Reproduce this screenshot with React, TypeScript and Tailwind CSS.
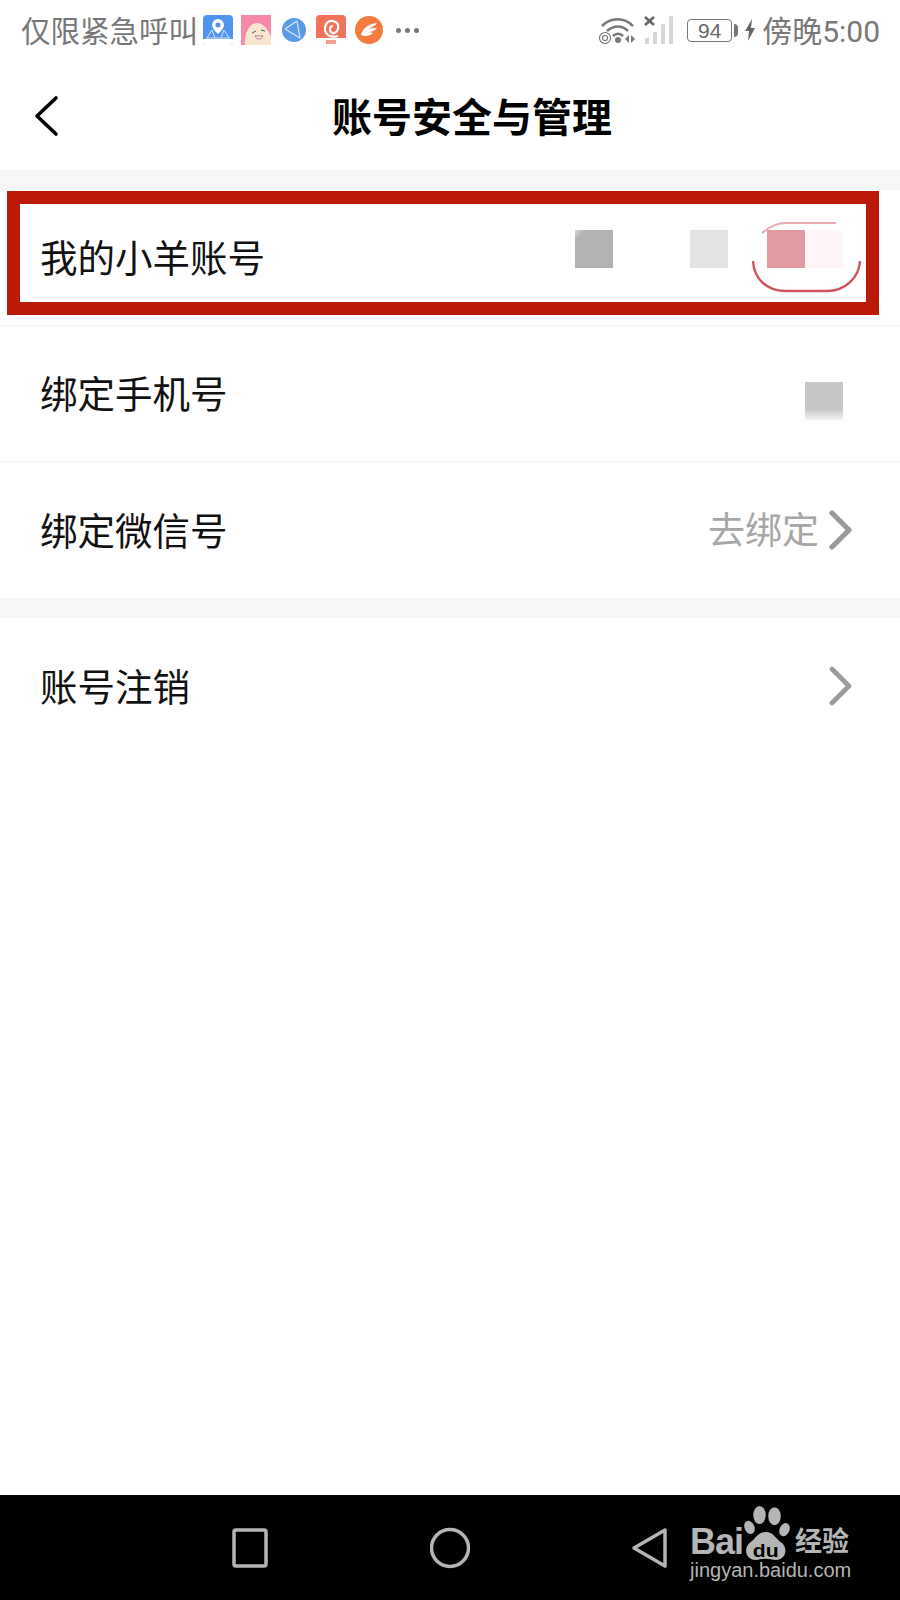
import type { ReactNode } from 'react'

const CJK = "font-['Noto_Sans_CJK_SC','Noto_Sans',sans-serif]"

function Chevron({ thick = false }: { thick?: boolean }) {
  return (
    <svg width="24" height="42" viewBox="0 0 24 42" fill="none" className="shrink-0">
      <path
        d="M4 4 L21 21 L4 38"
        stroke="#9a9a9a"
        strokeWidth={thick ? 5.2 : 4.6}
        strokeLinecap="round"
        strokeLinejoin="round"
      />
    </svg>
  )
}

function Row({ label, children, divider = true }: { label: string; children?: ReactNode; divider?: boolean }) {
  return (
    <div className={`relative flex h-[136px] items-center pl-[40px] ${divider ? 'border-b border-[#f4f4f4]' : ''}`}>
      <span className="pb-[3px] text-[37.5px] leading-none text-[#111]">{label}</span>
      {children}
    </div>
  )
}

function AppIcons() {
  return (
    <div className="ml-[5px] flex items-center">
      {/* map pin app */}
      <svg width="30" height="30" viewBox="0 0 30 30" className="shrink-0">
        <rect width="30" height="30" rx="4" fill="#4f95ee" />
        <path d="M0 24h30v2a4 4 0 0 1-4 4H4a4 4 0 0 1-4-4z" fill="#fff" />
        <path d="M15 4a6 6 0 0 1 6 6c0 4-6 9-6 9s-6-5-6-9a6 6 0 0 1 6-6z" fill="#fff" />
        <circle cx="15" cy="10" r="2.5" fill="#4f95ee" />
        <path d="M4 23l5-8 3 8M26 23l-5-8-3 8M3 23h24" stroke="#cfe3fb" strokeWidth="1" fill="none" />
      </svg>
      {/* cartoon face */}
      <svg width="30" height="30" viewBox="0 0 30 30" className="ml-[8px] shrink-0">
        <rect width="30" height="30" fill="#f988ac" />
        <path d="M4 30C3 16 10 7 17 8c7 1 11 9 13 14v8z" fill="#f8e6ce" />
        <path d="M11 18l4-2M20 15l4 1" stroke="#555" strokeWidth="1" />
        <path d="M14 21c2 4 6 4 8 0z" fill="#fff" stroke="#a55" strokeWidth="0.8" />
      </svg>
      {/* network globe */}
      <svg width="24" height="24" viewBox="0 0 24 24" className="ml-[11px] shrink-0">
        <circle cx="12" cy="12" r="12" fill="#5a9ae6" />
        <path d="M3 11L15 3M3 11l15 9M15 3l3 17" stroke="#d8e8fb" strokeWidth="1.2" />
      </svg>
      {/* spiral app */}
      <svg width="30" height="30" viewBox="0 0 30 30" className="ml-[10px] shrink-0">
        <rect width="30" height="30" rx="4" fill="#f0735a" />
        <rect y="23" width="30" height="7" fill="#fff" />
        <path d="M22 21c-7 2-13-1-13-7s4-9 8-8 6 4 5 8-5 5-7 3-1-6 2-6" stroke="#fff" strokeWidth="2.2" fill="none" />
        <rect x="10" y="25" width="10" height="4" fill="#f0a090" />
      </svg>
      {/* banana app */}
      <svg width="28" height="28" viewBox="0 0 28 28" className="ml-[9px] shrink-0">
        <circle cx="14" cy="14" r="14" fill="#f57c3e" />
        <path d="M6 19C8 12 13 8 22 7c-2 3-6 4-8 6 3-1 5-1 8-1-3 3-6 4-9 4 2 0 4 1 5 1-3 3-8 4-12 2z" fill="#fff" />
      </svg>
      {/* overflow dots */}
      <div className="ml-[13px] flex gap-[4px]">
        <span className="h-[5px] w-[5px] rounded-full bg-[#777]" />
        <span className="h-[5px] w-[5px] rounded-full bg-[#777]" />
        <span className="h-[5px] w-[5px] rounded-full bg-[#777]" />
      </div>
    </div>
  )
}

function StatusRight() {
  return (
    <div className="ml-auto flex items-center">
      {/* wifi */}
      <svg width="38" height="28" viewBox="0 0 38 28" className="shrink-0">
        <path d="M4 10C13 1 26 1 35 10" stroke="#777" strokeWidth="2.6" fill="none" />
        <path d="M9 15c7-6 15-6 21 0" stroke="#777" strokeWidth="2.6" fill="none" />
        <path d="M15 20c3-3 7-3 10 0" stroke="#777" strokeWidth="2.6" fill="none" />
        <circle cx="20" cy="24" r="3" fill="#777" />
        <circle cx="7" cy="22" r="5.5" stroke="#777" strokeWidth="1.2" fill="none" />
        <circle cx="7" cy="22" r="2.5" stroke="#777" strokeWidth="1.2" fill="none" />
        <path d="M27 23l4-4v8zM33 19l4 4-4 4z" fill="#777" />
      </svg>
      {/* signal */}
      <svg width="30" height="30" viewBox="0 0 30 30" className="ml-[8px] shrink-0">
        <path d="M1 2l9 8M10 2l-9 8" stroke="#666" strokeWidth="2.6" />
        <rect x="1" y="23" width="4" height="6" fill="#d6d6d6" />
        <rect x="9" y="17" width="4" height="12" fill="#d6d6d6" />
        <rect x="17" y="9" width="4" height="20" fill="#d6d6d6" />
        <rect x="25" y="1" width="4" height="28" fill="#d6d6d6" />
      </svg>
      {/* battery */}
      <div className="ml-[13px] flex h-[23px] w-[45px] items-center justify-center rounded-[4px] border border-[#777] font-['Liberation_Sans',sans-serif] text-[21px] leading-none text-[#666]">
        94
      </div>
      <span className="ml-[2px] h-[13px] w-[4px] rounded-r-sm bg-[#777]" />
      <svg width="12" height="22" viewBox="0 0 12 22" className="ml-[6px] shrink-0">
        <path d="M8 0L1 12h4l-1 10 7-13H7z" fill="#666" />
      </svg>
      <span className="ml-[6px] text-[30px] leading-none text-[#777]">
        傍晚<span className="font-['Roboto',sans-serif]">5:00</span>
      </span>
    </div>
  )
}

function BaiduMark() {
  return (
    <div className="absolute left-[690px] top-[8px] w-[165px] text-[#b5b5b5]">
      <div className="flex h-[58px] items-end">
        <span className="font-['Liberation_Sans',sans-serif] text-[36px] font-bold leading-[38px] tracking-[-1px]">Bai</span>
        <svg width="50" height="56" viewBox="6 0 40 50" preserveAspectRatio="none" className="-ml-[1px] shrink-0">
          <ellipse cx="12" cy="20" rx="4" ry="6" fill="#b5b5b5" transform="rotate(-18 12 20)" />
          <ellipse cx="20" cy="9" rx="5" ry="8" fill="#b5b5b5" />
          <ellipse cx="32" cy="10" rx="5" ry="8" fill="#b5b5b5" />
          <ellipse cx="40" cy="22" rx="4" ry="6" fill="#b5b5b5" transform="rotate(18 40 22)" />
          <path d="M25 24c6 0 8 6 13 10 5 5 3 15-5 15-3 0-5-1-8-1s-5 1-8 1c-8 0-10-10-5-15 5-4 7-10 13-10z" fill="#b5b5b5" />
          <text x="25" y="46" textAnchor="middle" fontSize="17" fontWeight="700" fontFamily="Liberation Sans" fill="#000">du</text>
        </svg>
        <span className={`${CJK} ml-[3px] pb-[4px] text-[27px] font-bold leading-[34px]`}>经验</span>
      </div>
      <div className="-mt-[3px] font-['Liberation_Sans',sans-serif] text-[20px] leading-[24px]">jingyan.baidu.com</div>
    </div>
  )
}

export default function App() {
  return (
    <div className={`flex h-[1600px] w-[900px] flex-col overflow-hidden bg-white ${CJK}`}>
      {/* Status bar */}
      <div className="flex h-[60px] items-center pl-[21px] pr-[20px]">
        <span className="text-[29.5px] leading-none text-[#777]">仅限紧急呼叫</span>
        <AppIcons />
        <StatusRight />
      </div>

      {/* Title bar */}
      <div className="relative flex h-[110px] items-center justify-center pl-[44px]">
        <svg width="26" height="42" viewBox="0 0 26 42" fill="none" className="absolute left-[33px] top-[35px]">
          <path d="M23 3 L4 21 L23 39" stroke="#000" strokeWidth="3.6" strokeLinecap="round" strokeLinejoin="round" />
        </svg>
        <h1 className="text-[40px] font-bold leading-none text-black">账号安全与管理</h1>
      </div>

      <div className="h-[20px] bg-[#f6f6f6]" />

      <Row label="我的小羊账号">
        <div className="ml-auto flex pb-[17px] pr-[57px]">
          <span className="h-[38px] w-[38px] bg-gradient-to-br from-[#d8d8d8] to-[#b2b2b2] to-15%" />
          <span className="ml-[77px] h-[38px] w-[38px] bg-[#e3e3e3]" />
          <span className="ml-[39px] h-[38px] w-[38px] bg-[#df9aa2]" />
          <span className="h-[38px] w-[38px] bg-[#fff7f7]" />
        </div>
        {/* red highlight box drawn over the row */}
        <div className="absolute left-[7px] top-px h-[124px] w-[872px] border-[13px] border-[#bc1a08]" />
        {/* stamp outline, mostly covered by the mosaic */}
        <svg width="112" height="74" viewBox="0 0 112 74" fill="none" className="absolute left-[750px] top-[31px]">
          <path d="M3 40c1 18 14 30 32 30h42c18 0 32-13 33-30" stroke="#d3505a" strokeWidth="2.4" />
          <path d="M12 12C20 5 28 2 36 2h50" stroke="#e8a8ad" strokeWidth="2" />
        </svg>
      </Row>

      <Row label="绑定手机号">
        <div className="ml-auto pr-[57px] pt-[15px]">
          <span className="block h-[38px] w-[38px] bg-gradient-to-b from-[#c6c6c6] from-70% to-[#f4f4f4]" />
        </div>
      </Row>

      <Row label="绑定微信号" divider={false}>
        <div className="ml-auto flex items-center gap-[9px] pr-[48px]">
          <span className="pb-[3px] text-[37px] leading-none text-[#a6a6a6]">去绑定</span>
          <Chevron thick />
        </div>
      </Row>

      <div className="h-[20px] bg-[#f6f6f6]" />

      <Row label="账号注销" divider={false}>
        <div className="ml-auto pr-[48px]">
          <Chevron />
        </div>
      </Row>

      <div className="flex-1" />

      {/* Navigation bar */}
      <div className="relative flex h-[105px] items-center justify-center gap-[160px] bg-black">
        <svg width="40" height="42" viewBox="0 0 40 42" fill="none">
          <rect x="4" y="3" width="32" height="36" rx="2" stroke="#b5b5b5" strokeWidth="3.5" />
        </svg>
        <svg width="40" height="42" viewBox="0 0 40 42" fill="none">
          <circle cx="20" cy="21" r="18.5" stroke="#b5b5b5" strokeWidth="3.5" />
        </svg>
        <svg width="40" height="42" viewBox="0 0 40 42" fill="none">
          <path d="M35 3 L4 21 L35 39 Z" stroke="#b5b5b5" strokeWidth="3.5" strokeLinejoin="round" />
        </svg>
        <BaiduMark />
      </div>
    </div>
  )
}
